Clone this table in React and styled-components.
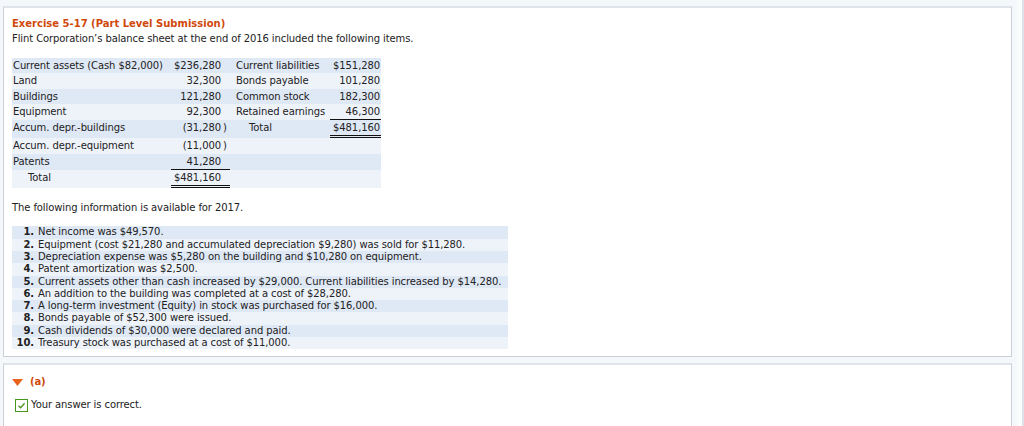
import React from "react"
import styled, { createGlobalStyle } from "styled-components"

const GlobalStyle = createGlobalStyle`
  html, body {
    margin: 0;
    padding: 0;
    background: #f4f8fb;
    overflow: hidden;
  }
  body {
    font-family: Verdana, "DejaVu Sans", sans-serif;
    font-size: 10px;
    letter-spacing: -0.1px;
    color: #222;
  }
`

const Page = styled.div`
  display: flex;
  min-height: 426px;
  .main {
    flex: 1;
    padding: 6px 5px 0 3px;
  }
  .rail {
    width: 5px;
    background: #fbfcfe;
    border-right: 2px solid #dde2e8;
  }
`

const Panel = styled.section`
  background: #fff;
  border: 1px solid #c9d0da;
  border-top: 2px solid #dfe4ea;
  padding: ${({ pad }) => pad};
  margin-bottom: 6px;
`

const Title = styled.h2`
  margin: 0;
  font-size: 10px;
  font-weight: 700;
  letter-spacing: 0;
  color: #d0490b;
  line-height: 14px;
`

const Text = styled.p`
  margin: ${({ m }) => m || "0"};
  line-height: 14px;
`

const Sheet = styled.div`
  width: 369px;
  margin-top: 12px;
`

const SheetRow = styled.div`
  display: grid;
  grid-template-columns: 159px 51px 8px 100px 51px;
  background: ${({ shade }) => (shade ? "#dfe8f5" : "#eef3fa")};
`

const Cell = styled.div`
  padding: 1px 1px;
  line-height: 13.3px;
  white-space: nowrap;
  text-align: ${({ right }) => (right ? "right" : "left")};
  padding-left: ${({ indent }) => (indent ? "16px" : "1px")};
  border-bottom: ${({ line }) =>
    line === "double" ? "3px double #111" : line === "single" ? "1px solid #111" : "none"};
`

const Info = styled.ol`
  list-style: none;
  margin: 11px 0 0;
  padding: 0;
  width: 496px;
`

const InfoItem = styled.li`
  display: flex;
  line-height: 12.3px;
  white-space: nowrap;
  background: ${({ shade }) => (shade ? "#dfe8f5" : "#eef3fa")};
  b {
    width: 22px;
    text-align: right;
    padding-right: 4px;
  }
`

const Part = styled.div`
  display: flex;
  align-items: center;
  gap: 7px;
  color: #d0490b;
  font-weight: 700;
  line-height: 14px;
`

const Correct = styled.div`
  display: flex;
  align-items: center;
  gap: 3px;
  margin: 9px 0 0 3px;
  line-height: 14px;
  .box {
    width: 11px;
    height: 11px;
    border: 1px solid #48951c;
    display: flex;
    align-items: center;
    justify-content: center;
  }
`

const rows = [
  ["Current assets (Cash $82,000)", "$236,280", "", "Current liabilities", "$151,280"],
  ["Land", "32,300", "", "Bonds payable", "101,280"],
  ["Buildings", "121,280", "", "Common stock", "182,300"],
  ["Equipment", "92,300", "", "Retained earnings", "46,300"],
  ["Accum. depr.-buildings", "(31,280", ")", "Total", "$481,160"],
  ["Accum. depr.-equipment", "(11,000", ")", "", ""],
  ["Patents", "41,280", "", "", ""],
  ["Total", "$481,160", "", "", ""],
]

const items = [
  "Net income was $49,570.",
  "Equipment (cost $21,280 and accumulated depreciation $9,280) was sold for $11,280.",
  "Depreciation expense was $5,280 on the building and $10,280 on equipment.",
  "Patent amortization was $2,500.",
  "Current assets other than cash increased by $29,000. Current liabilities increased by $14,280.",
  "An addition to the building was completed at a cost of $28,280.",
  "A long-term investment (Equity) in stock was purchased for $16,000.",
  "Bonds payable of $52,300 were issued.",
  "Cash dividends of $30,000 were declared and paid.",
  "Treasury stock was purchased at a cost of $11,000.",
]

export default function App() {
  return (
    <Page>
      <GlobalStyle />
      <div className="main">
        <Panel pad="9px 8px 7px">
          <Title>Exercise 5-17 (Part Level Submission)</Title>
          <Text m="1px 0 0">
            Flint Corporation’s balance sheet at the end of 2016 included the following items.
          </Text>
          <Sheet>
            {rows.map((r, i) => (
              <SheetRow key={i} shade={i % 2 === 0}>
                <Cell indent={i === 7}>{r[0]}</Cell>
                <Cell right line={i === 6 ? "single" : i === 7 ? "double" : null}>{r[1]}</Cell>
                <Cell line={i === 6 ? "single" : i === 7 ? "double" : null}>{r[2]}</Cell>
                <Cell style={{ paddingLeft: i === 4 ? 19 : 6 }}>{r[3]}</Cell>
                <Cell right line={i === 3 ? "single" : i === 4 ? "double" : null}>{r[4]}</Cell>
              </SheetRow>
            ))}
          </Sheet>
          <Text m="13px 0 0">The following information is available for 2017.</Text>
          <Info>
            {items.map((t, i) => (
              <InfoItem key={i} shade={i % 2 === 0}>
                <b>{i + 1}.</b>
                <span>{t}</span>
              </InfoItem>
            ))}
          </Info>
        </Panel>
        <Panel pad="10px 8px 30px">
          <Part>
            <svg width="11" height="7" viewBox="0 0 11 7">
              <path d="M0 0 H11 L5.5 7 Z" fill="#e8641e" />
            </svg>
            (a)
          </Part>
          <Correct>
            <span className="box">
              <svg width="9" height="9" viewBox="0 0 9 9">
                <path d="M1.5 4.8 L3.6 6.8 L7.6 2.2" fill="none" stroke="#48951c" strokeWidth="1.3" />
              </svg>
            </span>
            Your answer is correct.
          </Correct>
        </Panel>
      </div>
      <div className="rail" />
    </Page>
  )
}
